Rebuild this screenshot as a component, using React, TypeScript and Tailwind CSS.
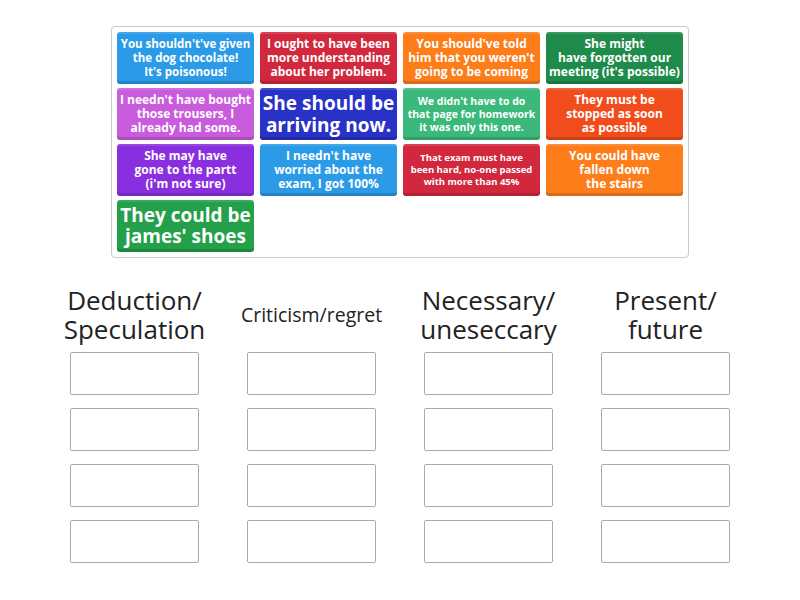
import React from 'react';

type Tile = { text: string[]; color: string; size: string };

const tiles: Tile[] = [
    { text: ["You shouldn't've given", 'the dog chocolate!', "It's poisonous!"], color: 'bg-[#2b9be8]', size: 'text-[11.5px] leading-[14px]' },
    { text: ['I ought to have been', 'more understanding', 'about her problem.'], color: 'bg-[#d2283d]', size: 'text-[12px] leading-[14px]' },
    { text: ["You should've told", "him that you weren't", 'going to be coming'], color: 'bg-[#fc7d1a]', size: 'text-[12px] leading-[14px]' },
    { text: ['She might', 'have forgotten our', "meeting (it's possible)"], color: 'bg-[#1f8b4b]', size: 'text-[12px] leading-[14px]' },
    { text: ["I needn't have bought", 'those trousers, I', 'already had some.'], color: 'bg-[#c95cdc]', size: 'text-[12px] leading-[14px]' },
    { text: ['She should be', 'arriving now.'], color: 'bg-[#2832c6]', size: 'text-[19px] leading-[22px]' },
    { text: ["We didn't have to do", 'that page for homework', 'it was only this one.'], color: 'bg-[#3bb97b]', size: 'text-[10.5px] leading-[13px]' },
    { text: ['They must be', 'stopped as soon', 'as possible'], color: 'bg-[#f04c1c]', size: 'text-[12px] leading-[14px]' },
    { text: ['She may have', 'gone to the partt', "(i'm not sure)"], color: 'bg-[#8a2fdf]', size: 'text-[12px] leading-[14px]' },
    { text: ["I needn't have", 'worried about the', 'exam, I got 100%'], color: 'bg-[#2b9be8]', size: 'text-[12px] leading-[14px]' },
    { text: ['That exam must have', 'been hard, no-one passed', 'with more than 45%'], color: 'bg-[#d2283d]', size: 'text-[9.5px] leading-[12px]' },
    { text: ['You could have', 'fallen down', 'the stairs'], color: 'bg-[#fc7d1a]', size: 'text-[12px] leading-[14px]' },
    { text: ['They could be', "james' shoes"], color: 'bg-[#23a049]', size: 'text-[19px] leading-[21px]' },
];

const groups = [
    { title: ['Deduction/', 'Speculation'], size: 'text-[26px] leading-[29px]' },
    { title: ['Criticism/regret'], size: 'text-[19.5px] leading-[24px]' },
    { title: ['Necessary/', 'uneseccary'], size: 'text-[26px] leading-[29px]' },
    { title: ['Present/', 'future'], size: 'text-[26px] leading-[29px]' },
];

export default function App() {
    return (
        <div className="w-[800px] h-[600px] bg-white font-['Open_Sans',sans-serif] pt-[26px]">
            {/* Tiles */}
            <div className="mx-auto w-[578px] border border-[#c9c9c9] rounded-[4px] p-[5px] grid grid-cols-4 gap-x-[6px] gap-y-[4px]">
                {tiles.map((t, i) => (
                    <div
                        key={i}
                        className={`${t.color} h-[52px] rounded-[3px] flex flex-col items-center justify-center text-white font-bold text-center shadow-[inset_0_-3px_0_rgba(0,0,0,0.15),inset_0_2px_0_rgba(255,255,255,0.12)] ${t.size}`}
                    >
                        {t.text.map((line) => (
                            <span key={line} className="whitespace-nowrap">{line}</span>
                        ))}
                    </div>
                ))}
            </div>

            {/* Drop zones */}
            <div className="mx-auto w-[708px] mt-[26px] grid grid-cols-4">
                {groups.map((g) => (
                    <div key={g.title[0]} className="flex flex-col items-center">
                        <div className={`h-[62px] flex flex-col items-center justify-center text-center text-[#222] ${g.size}`}>
                            {g.title.map((line) => (
                                <span key={line} className="whitespace-nowrap">{line}</span>
                            ))}
                        </div>
                        <div className="mt-[6px] flex flex-col gap-[13px]">
                            {[0, 1, 2, 3].map((n) => (
                                <div key={n} className="w-[129px] h-[43px] border border-[#aaaaaa] rounded-[2px] bg-white" />
                            ))}
                        </div>
                    </div>
                ))}
            </div>
        </div>
    );
}
